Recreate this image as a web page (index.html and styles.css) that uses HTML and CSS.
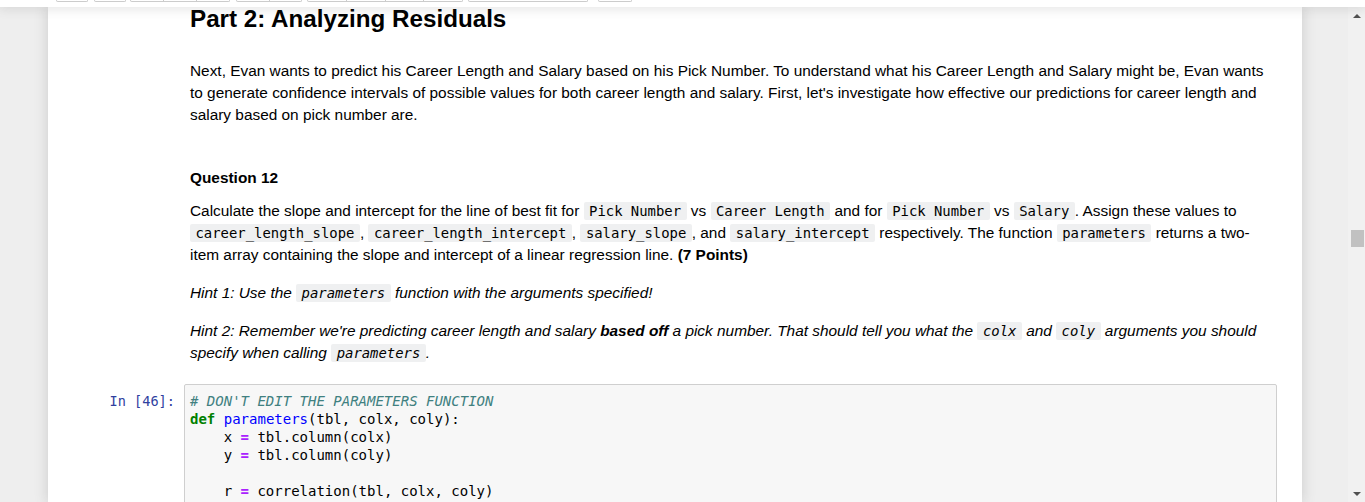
FILE: index.html
```html
<!DOCTYPE html>
<html>
<head>
<meta charset="utf-8">
<title>Part 2: Analyzing Residuals</title>
<link rel="stylesheet" href="styles.css">
</head>
<body>
<div class="header">
  <div class="tb tb-1"></div>
  <div class="tb tb-2"></div>
  <div class="tb tb-3"><span></span><span></span><span></span></div>
  <div class="tb tb-4"><span></span><span></span></div>
  <div class="tb tb-5"><span></span><span></span><span></span><span></span></div>
  <div class="tb tb-6"></div>
  <div class="tb tb-7"></div>
</div>
<div class="main">
  <div class="viewport">
    <div class="notebook">
      <div class="cell">
        <div class="prompt"></div>
        <div class="md">
          <h2 class="h-part">Part 2: Analyzing Residuals</h2>
          <p class="p-intro">Next, Evan wants to predict his Career Length and Salary based on his Pick Number. To understand what his Career Length and Salary might be, Evan wants to generate confidence intervals of possible values for both career length and salary. First, let's investigate how effective our predictions for career length and salary based on pick number are.</p>
        </div>
      </div>
      <div class="cell">
        <div class="prompt"></div>
        <div class="md">
          <h4 class="h-q">Question 12</h4>
          <p class="p-q">Calculate the slope and intercept for the line of best fit for <code>Pick Number</code> vs <code>Career Length</code> and for <code>Pick Number</code> vs <code>Salary</code>. Assign these values to <code>career_length_slope</code>, <code>career_length_intercept</code>, <code>salary_slope</code>, and <code>salary_intercept</code> respectively. The function <code>parameters</code> returns a two-item array containing the slope and intercept of a linear regression line. <strong>(7 Points)</strong></p>
          <p class="p-hint"><em>Hint 1: Use the <code>parameters</code> function with the arguments specified!</em></p>
          <p class="p-hint"><em>Hint 2: Remember we're predicting career length and salary <strong>based off</strong> a pick number. That should tell you what the <code>colx</code> and <code>coly</code> arguments you should specify when calling <code>parameters</code>.</em></p>
        </div>
      </div>
      <div class="cell code-cell">
        <div class="prompt in-prompt">In&nbsp;[46]:</div>
        <div class="input">
<pre class="code"><span class="c-com"># DON'T EDIT THE PARAMETERS FUNCTION</span>
<span class="c-kw">def</span> <span class="c-def">parameters</span>(tbl, colx, coly):
    x <span class="c-op">=</span> tbl.column(colx)
    y <span class="c-op">=</span> tbl.column(coly)

    r <span class="c-op">=</span> correlation(tbl, colx, coly)
    slope <span class="c-op">=</span> r <span class="c-op">*</span> np.std(y) <span class="c-op">/</span> np.std(x)
    intercept <span class="c-op">=</span> np.mean(y) <span class="c-op">-</span> slope <span class="c-op">*</span> np.mean(x)
</pre>
        </div>
      </div>
    </div>
  </div>
  <div class="scrollbar">
    <div class="sb-up"></div>
    <div class="sb-track"><div class="sb-thumb"></div></div>
    <div class="sb-down"></div>
  </div>
</div>
</body>
</html>
```

FILE: styles.css
```css
html, body {
  margin: 0;
  padding: 0;
  height: 502px;
  overflow: hidden;
}
body {
  background: #eeeeee;
  font-family: "Liberation Sans", Arial, sans-serif;
  color: #000;
  display: flex;
  flex-direction: column;
}

/* header toolbar remnants */
.header {
  height: 7px;
  background: #fff;
  position: relative;
  z-index: 2;
  box-shadow: 0 0 12px 1px rgba(87, 87, 87, 0.2);
  display: flex;
  align-items: flex-start;
  flex-shrink: 0;
}
.tb {
  height: 1px;
  border: 1px solid #cccccc;
  border-top: none;
  border-radius: 0 0 2px 2px;
  display: flex;
}
.tb span { flex: 1; }
.tb span + span { border-left: 1px solid #cccccc; }
.tb-1 { margin-left: 56px; width: 30px; }
.tb-2 { margin-left: 6px; width: 30px; }
.tb-3 { margin-left: 4px; width: 98px; }
.tb-4 { margin-left: 6px; width: 64px; }
.tb-5 { margin-left: 5px; width: 154px; }
.tb-6 { margin-left: 5px; width: 118px; }
.tb-7 { margin-left: 10px; width: 32px; }

.main {
  flex: 1;
  display: flex;
  min-height: 0;
}
.viewport {
  flex: 1;
  overflow: hidden;
  display: flex;
  justify-content: center;
}
.notebook {
  width: 1254px;
  margin-left: 2px;
  background: #fff;
  box-shadow: 0 0 12px 1px rgba(87, 87, 87, 0.2);
}

.cell {
  display: flex;
}
.prompt {
  width: 136px;
  flex-shrink: 0;
  box-sizing: border-box;
}
.md {
  flex: 1;
  margin-right: 25px;
  padding: 0 6px;
  font-size: 15.4px;
  line-height: 22px;
}
.md h2, .md h4, .md p { margin: 0; }
.h-part {
  font-size: 24.2px;
  line-height: 23px;
  font-weight: bold;
}
.p-intro { margin-top: 30px !important; }
.h-q {
  margin-top: 41px !important;
  font-size: 15.4px;
  font-weight: bold;
}
.p-q { margin-top: 11px !important; }
.p-hint { margin-top: 16px !important; }

.md code {
  font-family: "DejaVu Sans Mono", "Liberation Mono", monospace;
  font-size: 13.9px;
  background: #eff0f1;
  padding: 1px 5.5px;
  border-radius: 2px;
}
.md em code { font-style: italic; }

.code-cell { margin-top: 20px; }
.in-prompt {
  text-align: right;
  padding-right: 9px;
  padding-top: 8px;
  font-family: "DejaVu Sans Mono", "Liberation Mono", monospace;
  font-size: 13.6px;
  line-height: 18.1px;
  color: #303f9f;
}
.input {
  flex: 1;
  margin-right: 25px;
  background: #f7f7f7;
  border: 1px solid #cfcfcf;
  border-radius: 2px;
}
.code {
  margin: 0;
  padding: 7px 5px 20px;
  font-family: "DejaVu Sans Mono", "Liberation Mono", monospace;
  font-size: 14px;
  line-height: 18.1px;
  color: #000;
}
.c-com { color: #408080; font-style: italic; }
.c-kw { color: #008000; font-weight: bold; }
.c-def { color: #0000ff; }
.c-op { color: #aa22ff; font-weight: bold; }

/* scrollbar */
.scrollbar {
  width: 17px;
  flex-shrink: 0;
  background: #f1f1f1;
  display: flex;
  flex-direction: column;
}
.sb-up, .sb-down {
  height: 17px;
  flex-shrink: 0;
  display: flex;
  justify-content: center;
  align-items: center;
}
.sb-up::before {
  content: "";
  border-left: 4px solid transparent;
  border-right: 4px solid transparent;
  border-bottom: 4px solid #505050;
}
.sb-down::before {
  content: "";
  border-left: 4px solid transparent;
  border-right: 4px solid transparent;
  border-top: 4px solid #505050;
}
.sb-track {
  flex: 1;
  padding-top: 206px;
}
.sb-thumb {
  margin: 0 1px 0 3px;
  height: 17px;
  background: #c1c1c1;
}
```
